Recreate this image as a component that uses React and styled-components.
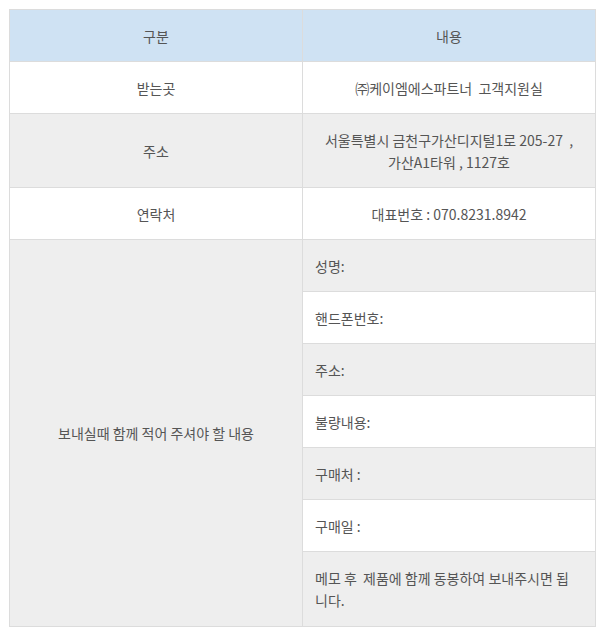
import React from "react";
import styled, { createGlobalStyle } from "styled-components";

const Global = createGlobalStyle`
  html, body { margin: 0; padding: 0; background: #fff; }
  body { font-family: "Noto Sans CJK KR", "Noto Sans", sans-serif; }
`;

const Wrap = styled.div`
  padding: 9px;
`;

const Table = styled.table`
  width: 587px;
  border-collapse: collapse;
  table-layout: fixed;
  font-size: 14px;
  color: #555;
  line-height: 22px;
`;

const Cell = styled.td`
  border: 1px solid #dcdcdc;
  height: ${(p) => p.$h || 51}px;
  padding: 0 12px;
  box-sizing: border-box;
  text-align: ${(p) => (p.$left ? "left" : "center")};
  vertical-align: middle;
  background: ${(p) => (p.$bg === "gray" ? "#eeeeee" : p.$bg === "blue" ? "#cfe2f3" : "#ffffff")};
`;

const Head = styled(Cell).attrs({ as: "th" })`
  font-weight: normal;
  color: #555;
`;

const sub = [
  ["성명:", "gray"],
  ["핸드폰번호:", "white"],
  ["주소:", "gray"],
  ["불량내용:", "white"],
  ["구매처 :", "gray"],
  ["구매일 :", "white"],
];

export default function App() {
  return (
    <Wrap>
      <Global />
      <Table>
        <colgroup>
          <col style={{ width: "50%" }} />
          <col style={{ width: "50%" }} />
        </colgroup>
        <thead>
          <tr>
            <Head $bg="blue" $h={52}>구분</Head>
            <Head $bg="blue" $h={52}>내용</Head>
          </tr>
        </thead>
        <tbody>
          <tr>
            <Cell $h={52}>받는곳</Cell>
            <Cell $h={52}>㈜케이엠에스파트너&nbsp; 고객지원실</Cell>
          </tr>
          <tr>
            <Cell $bg="gray" $h={74}>주소</Cell>
            <Cell $bg="gray" $h={74}>
              서울특별시 금천구가산디지털1로 205-27&nbsp; ,
              <br />
              가산A1타워 , 1127호
            </Cell>
          </tr>
          <tr>
            <Cell $h={52}>연락처</Cell>
            <Cell $h={52}>대표번호 : 070.8231.8942</Cell>
          </tr>
          {sub.map(([t, bg], i) => (
            <tr key={t}>
              {i === 0 && (
                <Cell $bg="gray" rowSpan={7}>
                  보내실때 함께 적어 주셔야 할 내용
                </Cell>
              )}
              <Cell $bg={bg} $left $h={52}>
                {t}
              </Cell>
            </tr>
          ))}
          <tr>
            <Cell $bg="gray" $left $h={75}>
              메모 후&nbsp; 제품에 함께 동봉하여 보내주시면 됩
              <br />
              니다.
            </Cell>
          </tr>
        </tbody>
      </Table>
    </Wrap>
  );
}
